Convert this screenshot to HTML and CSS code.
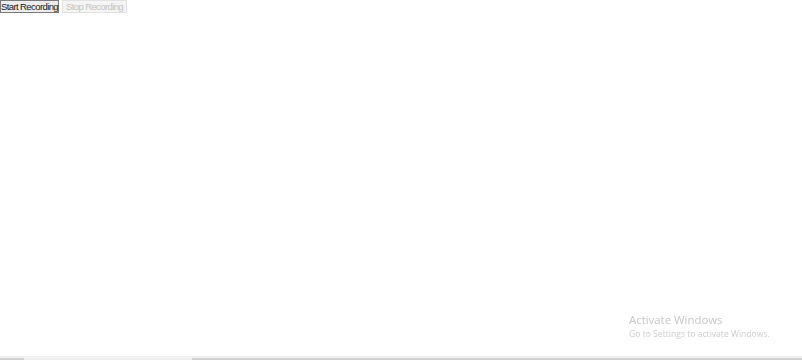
FILE: index.html
```html
<!DOCTYPE html>
<html>
<head>
<meta charset="utf-8">
<link rel="stylesheet" href="styles.css">
</head>
<body>
<div class="page">
  <div class="toolbar">
    <button class="btn btn-start">Start Recording</button>
    <button class="btn btn-stop" disabled>Stop Recording</button>
  </div>
  <div class="main"></div>
  <div class="bottom">
    <div class="bottom-line"></div>
    <div class="bottom-strip">
      <div class="seg seg-a"></div>
      <div class="seg seg-b"></div>
      <div class="seg seg-c"></div>
    </div>
  </div>
</div>
<div class="watermark">
  <div class="wm-title">Activate Windows</div>
  <div class="wm-sub">Go to Settings to activate Windows.</div>
</div>
</body>
</html>
```
FILE: styles.css
```css
html, body {
  margin: 0;
  padding: 0;
  background: #ffffff;
}
.page {
  height: 100vh;
  display: flex;
  flex-direction: column;
  font-family: "Liberation Sans", Arial, sans-serif;
}
.toolbar {
  display: flex;
  gap: 3px;
  align-items: flex-start;
}
.btn {
  box-sizing: border-box;
  height: 13px;
  padding: 0;
  margin: 0;
  font-family: "Liberation Sans", Arial, sans-serif;
  font-size: 9.5px;
  letter-spacing: -0.6px;
  line-height: 11px;
  border-radius: 0;
}
.btn-start {
  width: 59px;
  background: #ececec;
  border: 1px solid #7a7a7a;
  color: #1a1a1a;
}
.btn-stop {
  width: 65px;
  background: #f5f5f5;
  border: 1px solid #e2e2e2;
  color: #c2c2c2;
}
.main {
  flex: 1;
}
.bottom {
  display: flex;
  flex-direction: column;
}
.bottom-line {
  height: 1px;
  background: #ececec;
}
.bottom-strip {
  display: flex;
  height: 2px;
  border-top: 1px solid #f4f4f4;
}
.seg-a {
  width: 24px;
  background: #cfcfcf;
}
.seg-b {
  width: 168px;
  background: #eeeeee;
}
.seg-c {
  flex: 1;
  background: #cfcfcf;
}
.watermark {
  position: fixed;
  left: 629px;
  top: 312px;
  font-family: "Open Sans", "Noto Sans", sans-serif;
  color: #c6c6c6;
}
.wm-title {
  font-size: 11.4px;
  line-height: 15px;
}
.wm-sub {
  font-size: 8.6px;
  line-height: 12px;
  margin-top: 1px;
  color: #cdcdcd;
}
```
